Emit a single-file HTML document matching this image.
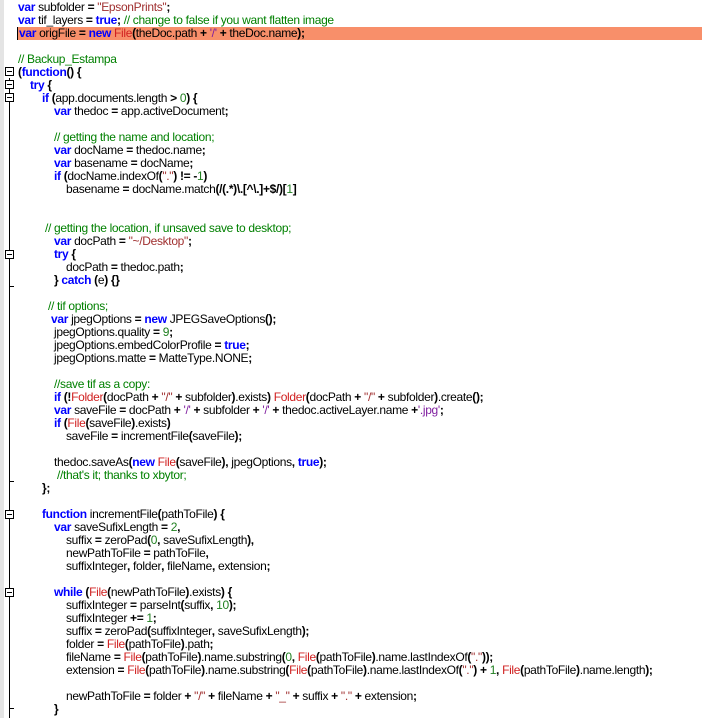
<!DOCTYPE html>
<html><head><meta charset="utf-8"><style>
html,body{margin:0;padding:0;background:#fff;width:702px;height:718px;overflow:hidden;position:relative}
.g{position:absolute;left:0;top:0;width:4px;height:718px;background:#e4e4e4}
.l{position:absolute;height:13px;line-height:13px;font-family:"Liberation Sans",sans-serif;font-size:12px;letter-spacing:-0.32px;white-space:pre;color:#000}
.k{color:#0000ff;font-weight:bold}
.o{font-weight:bold}
.s{color:#a03030}
.q{color:#8020a0}
.f{color:#d02020}
.n{color:#208020}
.c{color:#008000}
.hl{position:absolute;left:17px;top:27px;width:685px;height:13px;background:#f88f6a}
.caret{position:absolute;left:17px;top:27px;width:1px;height:13px;background:#000}
.vl{position:absolute;left:9px;width:1px;background:#000}
.fb{position:absolute;left:5px;width:7px;height:7px;border:1px solid #000;background:#fff}
.fb:after{content:"";position:absolute;left:1px;top:3px;width:5px;height:1px;background:#000}
.t{position:absolute;left:9px;width:5px;height:1px;background:#000}
</style></head><body>
<div class="g"></div>
<div class="hl"></div>
<div class="vl" style="top:78px;height:640px"></div>
<div class="fb" style="top:67px"></div>
<div class="fb" style="top:80px"></div>
<div class="fb" style="top:93px"></div>
<div class="fb" style="top:250px"></div>
<div class="t" style="top:286px"></div>
<div class="t" style="top:481px"></div>
<div class="fb" style="top:510px"></div>
<div class="fb" style="top:588px"></div>
<div class="t" style="top:708px"></div>

<div class="l" style="top:1px;left:18px"><span class="k">var</span> subfolder <span class="o">=</span> <span class="s">"EpsonPrints"</span><span class="o">;</span></div>
<div class="l" style="top:14px;left:18px"><span class="k">var</span> tif_layers <span class="o">=</span> <span class="k">true</span><span class="o">;</span> <span class="c">// change to false if you want flatten image</span></div>
<div class="l" style="top:27px;left:19px"><span class="k">var</span> origFile <span class="o">=</span> <span class="k">new</span> <span class="f">File</span><span class="o">(</span>theDoc.path <span class="o">+</span> <span class="q">'/'</span> <span class="o">+</span> theDoc.name<span class="o">);</span></div>
<div class="caret"></div>
<div class="l" style="top:53px;left:18px"><span class="c">// Backup_Estampa</span></div>
<div class="l" style="top:66px;left:18px"><span class="o">(</span><span class="k">function</span><span class="o">() {</span></div>
<div class="l" style="top:79px;left:30px"><span class="k">try</span> <span class="o">{</span></div>
<div class="l" style="top:92px;left:42px"><span class="k">if</span> <span class="o">(</span>app.documents.length <span class="o">&gt;</span> <span class="n">0</span><span class="o">) {</span></div>
<div class="l" style="top:105px;left:54px"><span class="k">var</span> thedoc <span class="o">=</span> app.activeDocument<span class="o">;</span></div>
<div class="l" style="top:131px;left:54px"><span class="c">// getting the name and location;</span></div>
<div class="l" style="top:144px;left:54px"><span class="k">var</span> docName <span class="o">=</span> thedoc.name<span class="o">;</span></div>
<div class="l" style="top:157px;left:54px"><span class="k">var</span> basename <span class="o">=</span> docName<span class="o">;</span></div>
<div class="l" style="top:170px;left:54px"><span class="k">if</span> <span class="o">(</span>docName.indexOf<span class="o">(</span><span class="s">"."</span><span class="o">) !=</span> <span class="o">-</span><span class="n">1</span><span class="o">)</span></div>
<div class="l" style="top:183px;left:66px">basename <span class="o">=</span> docName.match<span class="o">(/(.*)\.[^\.]+$/)[</span><span class="n">1</span><span class="o">]</span></div>
<div class="l" style="top:222px;left:45px"><span class="c">// getting the location, if unsaved save to desktop;</span></div>
<div class="l" style="top:235px;left:54px"><span class="k">var</span> docPath <span class="o">=</span> <span class="s">"~/Desktop"</span><span class="o">;</span></div>
<div class="l" style="top:248px;left:54px"><span class="k">try</span> <span class="o">{</span></div>
<div class="l" style="top:261px;left:66px">docPath <span class="o">=</span> thedoc.path<span class="o">;</span></div>
<div class="l" style="top:274px;left:54px"><span class="o">}</span> <span class="k">catch</span> <span class="o">(</span>e<span class="o">) {}</span></div>
<div class="l" style="top:300px;left:48px"><span class="c">// tif options;</span></div>
<div class="l" style="top:313px;left:51px"><span class="k">var</span> jpegOptions <span class="o">=</span> <span class="k">new</span> JPEGSaveOptions<span class="o">();</span></div>
<div class="l" style="top:326px;left:54px">jpegOptions.quality <span class="o">=</span> <span class="n">9</span><span class="o">;</span></div>
<div class="l" style="top:339px;left:54px">jpegOptions.embedColorProfile <span class="o">=</span> <span class="k">true</span><span class="o">;</span></div>
<div class="l" style="top:352px;left:54px">jpegOptions.matte <span class="o">=</span> MatteType.NONE<span class="o">;</span></div>
<div class="l" style="top:378px;left:54px"><span class="c">//save tif as a copy:</span></div>
<div class="l" style="top:391px;left:54px"><span class="k">if</span> <span class="o">(!</span><span class="f">Folder</span><span class="o">(</span>docPath <span class="o">+</span> <span class="s">"/"</span> <span class="o">+</span> subfolder<span class="o">)</span>.exists<span class="o">)</span> <span class="f">Folder</span><span class="o">(</span>docPath <span class="o">+</span> <span class="s">"/"</span> <span class="o">+</span> subfolder<span class="o">)</span>.create<span class="o">();</span></div>
<div class="l" style="top:404px;left:54px"><span class="k">var</span> saveFile <span class="o">=</span> docPath <span class="o">+</span> <span class="q">'/'</span> <span class="o">+</span> subfolder <span class="o">+</span> <span class="q">'/'</span> <span class="o">+</span> thedoc.activeLayer.name <span class="o">+</span><span class="q">'.jpg'</span><span class="o">;</span></div>
<div class="l" style="top:417px;left:54px"><span class="k">if</span> <span class="o">(</span><span class="f">File</span><span class="o">(</span>saveFile<span class="o">)</span>.exists<span class="o">)</span></div>
<div class="l" style="top:430px;left:66px">saveFile <span class="o">=</span> incrementFile<span class="o">(</span>saveFile<span class="o">);</span></div>
<div class="l" style="top:456px;left:54px">thedoc.saveAs<span class="o">(</span><span class="k">new</span> <span class="f">File</span><span class="o">(</span>saveFile<span class="o">),</span> jpegOptions<span class="o">,</span> <span class="k">true</span><span class="o">);</span></div>
<div class="l" style="top:469px;left:57px"><span class="c">//that's it; thanks to xbytor;</span></div>
<div class="l" style="top:482px;left:42px"><span class="o">};</span></div>
<div class="l" style="top:508px;left:42px"><span class="k">function</span> incrementFile<span class="o">(</span>pathToFile<span class="o">) {</span></div>
<div class="l" style="top:521px;left:54px"><span class="k">var</span> saveSufixLength <span class="o">=</span> <span class="n">2</span><span class="o">,</span></div>
<div class="l" style="top:534px;left:66px">suffix <span class="o">=</span> zeroPad<span class="o">(</span><span class="n">0</span><span class="o">,</span> saveSufixLength<span class="o">),</span></div>
<div class="l" style="top:547px;left:66px">newPathToFile <span class="o">=</span> pathToFile<span class="o">,</span></div>
<div class="l" style="top:560px;left:66px">suffixInteger<span class="o">,</span> folder<span class="o">,</span> fileName<span class="o">,</span> extension<span class="o">;</span></div>
<div class="l" style="top:586px;left:54px"><span class="k">while</span> <span class="o">(</span><span class="f">File</span><span class="o">(</span>newPathToFile<span class="o">)</span>.exists<span class="o">) {</span></div>
<div class="l" style="top:599px;left:66px">suffixInteger <span class="o">=</span> parseInt<span class="o">(</span>suffix<span class="o">,</span> <span class="n">10</span><span class="o">);</span></div>
<div class="l" style="top:612px;left:66px">suffixInteger <span class="o">+=</span> <span class="n">1</span><span class="o">;</span></div>
<div class="l" style="top:625px;left:66px">suffix <span class="o">=</span> zeroPad<span class="o">(</span>suffixInteger<span class="o">,</span> saveSufixLength<span class="o">);</span></div>
<div class="l" style="top:638px;left:66px">folder <span class="o">=</span> <span class="f">File</span><span class="o">(</span>pathToFile<span class="o">)</span>.path<span class="o">;</span></div>
<div class="l" style="top:651px;left:66px">fileName <span class="o">=</span> <span class="f">File</span><span class="o">(</span>pathToFile<span class="o">)</span>.name.substring<span class="o">(</span><span class="n">0</span><span class="o">,</span> <span class="f">File</span><span class="o">(</span>pathToFile<span class="o">)</span>.name.lastIndexOf<span class="o">(</span><span class="s">"."</span><span class="o">));</span></div>
<div class="l" style="top:664px;left:66px">extension <span class="o">=</span> <span class="f">File</span><span class="o">(</span>pathToFile<span class="o">)</span>.name.substring<span class="o">(</span><span class="f">File</span><span class="o">(</span>pathToFile<span class="o">)</span>.name.lastIndexOf<span class="o">(</span><span class="s">"."</span><span class="o">)</span> <span class="o">+</span> <span class="n">1</span><span class="o">,</span> <span class="f">File</span><span class="o">(</span>pathToFile<span class="o">)</span>.name.length<span class="o">);</span></div>
<div class="l" style="top:690px;left:66px">newPathToFile <span class="o">=</span> folder <span class="o">+</span> <span class="s">"/"</span> <span class="o">+</span> fileName <span class="o">+</span> <span class="s">"_"</span> <span class="o">+</span> suffix <span class="o">+</span> <span class="s">"."</span> <span class="o">+</span> extension<span class="o">;</span></div>
<div class="l" style="top:703px;left:54px"><span class="o">}</span></div>
</body></html>
